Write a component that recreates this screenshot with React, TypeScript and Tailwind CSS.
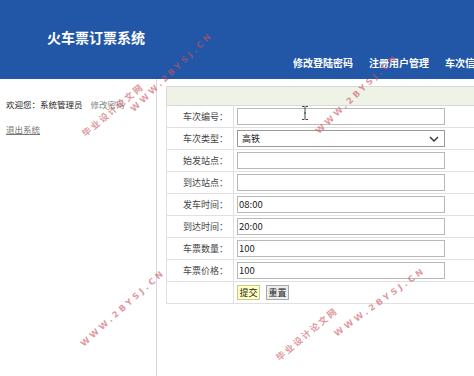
import React from 'react';

const font = { fontFamily: '"Microsoft YaHei", "Noto Sans CJK SC", sans-serif' };
const wmFont = { fontFamily: '"DejaVu Sans", sans-serif' };

const rows = [
  { label: '车次编号：', value: '' },
  { label: '车次类型：', value: '高铁', select: true },
  { label: '始发站点：', value: '' },
  { label: '到达站点：', value: '' },
  { label: '发车时间：', value: '08:00' },
  { label: '到达时间：', value: '20:00' },
  { label: '车票数量：', value: '100' },
  { label: '车票价格：', value: '100' },
];

const App = () => {
  return (
    <div className="relative w-[474px] h-[376px] overflow-hidden bg-white text-[#333]" style={font}>
      {/* Header */}
      <header className="h-[79px] bg-[#2256a7] text-white flex flex-col">
        <h1 className="pl-[47px] pt-[28px] text-[14px] font-bold leading-[18px]">火车票订票系统</h1>
        <nav className="flex gap-[16px] pl-[293px] pt-[10px] text-[10px] font-bold whitespace-nowrap leading-[14px]">
          <span>修改登陆密码</span>
          <span>注册用户管理</span>
          <span>车次信息管理</span>
        </nav>
      </header>

      <div className="flex h-[297px]">
        {/* Sidebar */}
        <aside className="w-[157px] shrink-0 border-r border-[#d6d6d6] pl-[6px] pt-[18px] text-[8.5px] leading-[14px]">
          <div className="flex gap-[8px] whitespace-nowrap">
            <span className="text-[#222]">欢迎您：系统管理员</span>
            <span className="text-[#888]">修改密码</span>
          </div>
          <div className="mt-[11px] text-[#777] underline">退出系统</div>
        </aside>

        {/* Form */}
        <main className="pl-[9px] pt-[7px]">
          <table className="w-[330px] border-collapse border border-[#d9d9d9] text-[9px]">
            <tbody>
              <tr className="h-[19px] bg-[#eef3e6]">
                <td colSpan={2} className="border border-[#d9d9d9]"></td>
              </tr>
              {rows.map((r) => (
                <tr key={r.label} className="h-[22px]">
                  <td className="w-[67px] border border-[#e0e0e0] text-right pr-[5px] text-[#444] whitespace-nowrap">{r.label}</td>
                  <td className="border border-[#e0e0e0] pl-[3px]">
                    {r.select ? (
                      <div className="w-[208px] h-[17px] border border-[#999] bg-white flex items-center justify-between pl-[4px] pr-[5px]">
                        <span className="text-[#222]">{r.value}</span>
                        <svg width="10" height="6" viewBox="0 0 10 6" fill="none" stroke="#333" strokeWidth="1.4">
                          <path d="M1 1l4 4 4-4" />
                        </svg>
                      </div>
                    ) : (
                      <div className="w-[208px] h-[17px] border border-[#b8b8b8] bg-white flex items-center pl-[1px] text-[9.5px] text-[#222]">
                        {r.value}
                      </div>
                    )}
                  </td>
                </tr>
              ))}
              <tr className="h-[22px]">
                <td className="border border-[#e0e0e0]"></td>
                <td className="border border-[#e0e0e0] pl-[3px]">
                  <div className="flex gap-[6px]">
                    <button className="w-[23px] h-[15px] bg-[#ffffbf] border border-[#c8c890] text-[9px] leading-[13px] text-[#222]">提交</button>
                    <button className="w-[23px] h-[15px] bg-[#ececec] border border-[#aaa] text-[9px] leading-[13px] text-[#222]">重置</button>
                  </div>
                </td>
              </tr>
            </tbody>
          </table>
        </main>
      </div>

      {/* I-beam cursor */}
      <svg className="absolute left-[301px] top-[106px]" width="8" height="14" viewBox="0 0 8 14" fill="none" stroke="#444" strokeWidth="1">
        <path d="M1 0.5h2.5M4.5 0.5h2.5M4 1v12M1 13.5h2.5M4.5 13.5h2.5M3 7h2" />
      </svg>

      {/* Watermarks */}
      <div className="pointer-events-none absolute left-[172px] top-[72px] -translate-x-1/2 -translate-y-1/2 -rotate-[44deg] text-[8.5px] font-bold tracking-[3px] text-[#c9515d]/60 whitespace-nowrap" style={wmFont}>WWW.2BYSJ.CN</div>
      <div className="pointer-events-none absolute left-[113px] top-[110px] -translate-x-1/2 -translate-y-1/2 -rotate-[40deg] text-[9px] font-bold tracking-[2px] text-[#c9515d]/60 whitespace-nowrap">毕业设计论文网</div>
      <div className="pointer-events-none absolute left-[357px] top-[94px] -translate-x-1/2 -translate-y-1/2 -rotate-[44deg] text-[8.5px] font-bold tracking-[3px] text-[#c9515d]/60 whitespace-nowrap" style={wmFont}>WWW.2BYSJ.CN</div>
      <div className="pointer-events-none absolute left-[123px] top-[308px] -translate-x-1/2 -translate-y-1/2 -rotate-[42deg] text-[8.5px] font-bold tracking-[3px] text-[#c9515d]/60 whitespace-nowrap" style={wmFont}>WWW.2BYSJ.CN</div>
      <div className="pointer-events-none absolute left-[307px] top-[334px] -translate-x-1/2 -translate-y-1/2 -rotate-[40deg] text-[9px] font-bold tracking-[2px] text-[#c9515d]/60 whitespace-nowrap">毕业设计论文网</div>
      <div className="pointer-events-none absolute left-[380px] top-[302px] -translate-x-1/2 -translate-y-1/2 -rotate-[36deg] text-[8.5px] font-bold tracking-[3px] text-[#c9515d]/60 whitespace-nowrap" style={wmFont}>WWW.2BYSJ.CN</div>
    </div>
  );
};

export default App;
